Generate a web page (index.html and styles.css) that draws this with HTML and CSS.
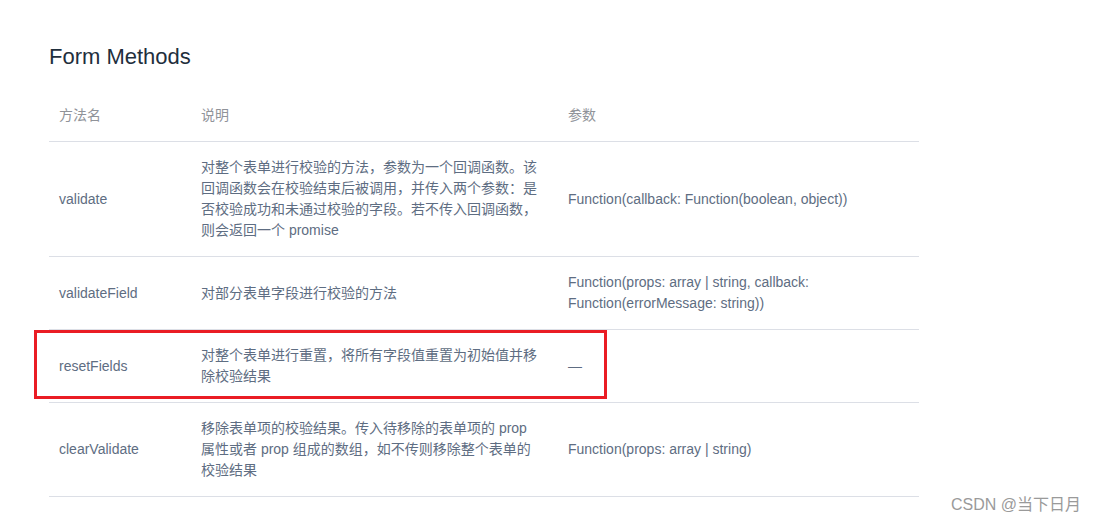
FILE: index.html
```html
<!DOCTYPE html>
<html lang="zh-CN">
<head>
<meta charset="utf-8">
<title>Form Methods</title>
<link rel="stylesheet" href="styles.css">
</head>
<body>
<div class="page">
  <h3 class="title">Form Methods</h3>
  <div class="table-wrap">
    <table class="methods">
      <colgroup>
        <col class="c1"><col class="c2"><col class="c3">
      </colgroup>
      <thead>
        <tr><th>方法名</th><th>说明</th><th>参数</th></tr>
      </thead>
      <tbody>
        <tr>
          <td>validate</td>
          <td class="desc">对整个表单进行校验的方法，参数为一个回调函数。该回调函数会在校验结束后被调用，并传入两个参数：是否校验成功和未通过校验的字段。若不传入回调函数，则会返回一个 promise</td>
          <td>Function(callback: Function(boolean, object))</td>
        </tr>
        <tr>
          <td>validateField</td>
          <td class="desc">对部分表单字段进行校验的方法</td>
          <td>Function(props: array | string, callback: Function(errorMessage: string))</td>
        </tr>
        <tr>
          <td>resetFields</td>
          <td class="desc">对整个表单进行重置，将所有字段值重置为初始值并移除校验结果</td>
          <td>—</td>
        </tr>
        <tr>
          <td>clearValidate</td>
          <td class="desc">移除表单项的校验结果。传入待移除的表单项的 prop 属性或者 prop 组成的数组，如不传则移除整个表单的<span class="nowrap">校验结果</span></td>
          <td>Function(props: array | string)</td>
        </tr>
      </tbody>
    </table>
    <div class="highlight"></div>
  </div>
</div>
<div class="watermark">CSDN @当下日月</div>
</body>
</html>
```
FILE: styles.css
```css
html, body {
  margin: 0;
  padding: 0;
  background: #fff;
}
body {
  font-family: "Liberation Sans", Arial, "Noto Sans CJK SC", sans-serif;
  width: 1099px;
  height: 523px;
  overflow: hidden;
  position: relative;
}
.page {
  padding-left: 49px;
}
.title {
  margin: 40px 0 17px;
  font-size: 22px;
  line-height: 33px;
  font-weight: 400;
  color: #1f2f3d;
}
.table-wrap {
  position: relative;
  width: 870px;
}
.methods {
  width: 870px;
  border-collapse: collapse;
  table-layout: fixed;
  font-size: 14px;
  line-height: 21px;
  color: #5e6d82;
}
.c1 { width: 142px; }
.c2 { width: 367px; }
.c3 { width: 361px; }
.methods th,
.methods td {
  padding: 15px 10px;
  text-align: left;
  vertical-align: middle;
  border-bottom: 1px solid #dcdfe6;
}
.methods th {
  font-weight: 400;
  color: #909399;
  font-size: 14px;
}
.methods td {
  color: #5e6d82;
}
.methods td.desc {
  padding-right: 16px;
}
.nowrap {
  white-space: nowrap;
}
.highlight {
  position: absolute;
  left: -15px;
  top: 240px;
  width: 567px;
  height: 63px;
  border: 3px solid #ea1c24;
  pointer-events: none;
}
.watermark {
  position: absolute;
  left: 951px;
  top: 494px;
  font-size: 16px;
  line-height: 22px;
  color: #9a9a9a;
  font-family: "Liberation Sans", Arial, "Noto Sans CJK SC", sans-serif;
}
```
